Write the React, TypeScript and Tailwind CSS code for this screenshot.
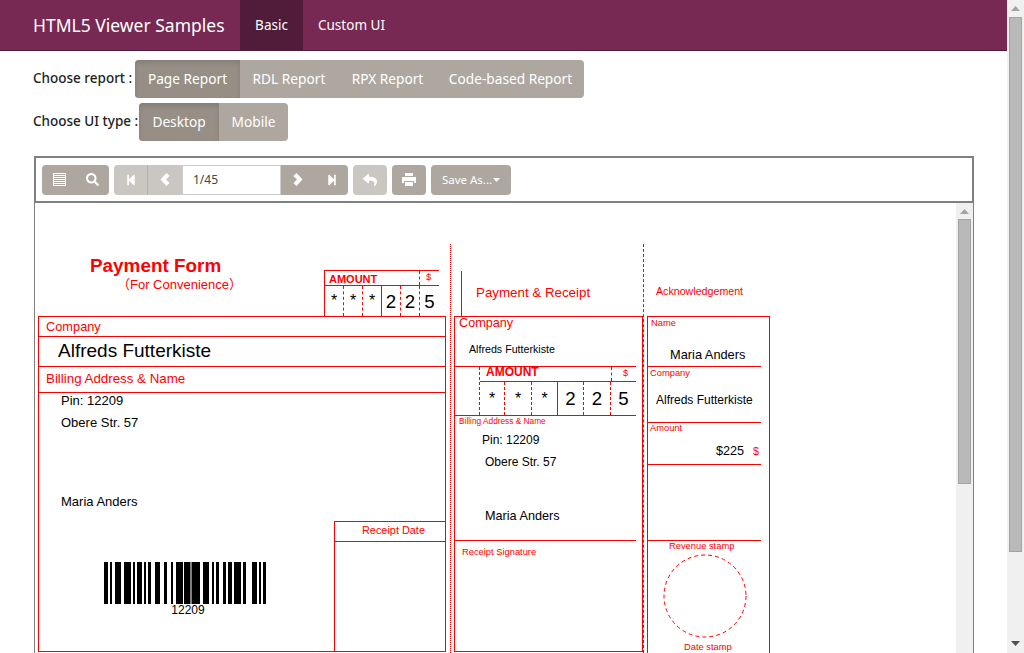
import React from "react";
import { FaReply, FaSearch, FaStepBackward, FaStepForward } from "react-icons/fa";

const bars: [number, number][] = [
  [104, 108], [110, 112], [115, 121], [124, 131], [133, 135], [137, 142], [144, 146], [148, 151], [155, 160], [164, 167],
  [171, 173], [176, 183], [184, 190.5], [191.5, 200], [203, 209], [212, 214], [216, 219], [223, 226], [228, 232],
  [234, 241], [243, 246], [252, 257], [259, 261], [263, 266],
];

function ListIcon() {
  return (
    <svg width="13" height="13" viewBox="0 0 13 13" fill="none" stroke="#fff">
      <path d="M.5 0v13M12.5 0v13M0 .5h13M0 2.5h13M0 4.5h13M0 6.5h13M0 8.5h13M0 10.5h13M0 12.5h13" />
    </svg>
  );
}

function PrintIcon() {
  return (
    <svg width="14" height="13" viewBox="0 0 14 13" fill="#fff">
      <path d="M3 0h8v3H3zM0 4h14v6h-2V8H2v2H0zM3 9h8v4H3z" />
    </svg>
  );
}

function Chevron({ right }: { right?: boolean }) {
  return (
    <svg width="10" height="13" viewBox="0 0 10 13" fill="#fff">
      <path d={right ? "M3.5 0l6 6.5-6 6.5-3-3L4 6.500.5 3z" : "M6.500 0l-6 6.500 6 6.500 3-3L6 6.500 9.500 3z"} />
    </svg>
  );
}

function Arrow({ down }: { down?: boolean }) {
  return (
    <svg width="9" height="5" viewBox="0 0 9 5">
      <path d={down ? "M0 0h9L4.5 5z" : "M4.5 0L9 5H0z"} fill={down ? "#505050" : "#a3a3a3"} />
    </svg>
  );
}

function Cell({ big, width, children }: { big?: boolean; width: string; children: React.ReactNode }) {
  return (
    <div className={`${width} flex items-center justify-center border-r border-dashed border-[#ff0000] leading-[16px] text-black ${big ? "text-[18.67px]" : "text-[16px]"}`}>
      {children}
    </div>
  );
}

function PaymentForm() {
  return (
    <section className="ml-[3px] w-[412px] shrink-0">
      <div className="flex h-[113px]">
        <div className="w-[286px] pl-[52px] pt-[52px] text-[#ff0000]">
          <div className="text-[18.9px] font-bold leading-[22px]">Payment Form</div>
          <div className="ml-[27px] whitespace-nowrap text-[13px] leading-[16px]">（For Convenience）</div>
        </div>
        <div className="w-[115px] pt-[67px]">
          <div className="border-l border-t border-[#ff0000]">
            <div className="flex h-[15px] border-b border-[#ff0000] text-[#ff0000]">
              <div className="flex-1 pl-[4px] text-[11px] font-bold leading-[16px]">AMOUNT</div>
              <div className="w-[20px] border-l border-dashed border-[#ff0000] pl-[6px] text-[9.33px] leading-[12px]">$</div>
            </div>
            <div className="flex h-[30px]">
              <Cell width="w-[19px]">*</Cell>
              <Cell width="w-[19px]">*</Cell>
              <div className="flex w-[19px] items-center justify-center border-r border-[#ff0000] text-[16px] leading-[16px] text-black">*</div>
              <Cell big width="w-[19px]"><span className="pt-[2px]">2</span></Cell>
              <Cell big width="w-[19px]"><span className="pt-[2px]">2</span></Cell>
              <div className="flex w-[19px] items-center justify-center pt-[2px] text-[18.67px] leading-[16px] text-black">5</div>
            </div>
          </div>
        </div>
      </div>
      <div className="flex h-[336px] w-[408px] flex-col border border-[#ff0000]">
        <div className="flex h-[20px] items-center border-b border-[#ff0000] pl-[7px] text-[12.8px] text-[#ff0000]">Company</div>
        <div className="flex h-[30px] items-center border-b border-[#ff0000] pb-[1px] pl-[19px] text-[19px] text-black">Alfreds Futterkiste</div>
        <div className="flex h-[26px] items-center border-b border-[#ff0000] pb-[2px] pl-[7px] text-[13.33px] text-[#ff0000]">Billing Address &amp; Name</div>
        <div className="flex flex-1">
          <div className="w-[295px] text-[13px] leading-[16px] text-black">
            <div className="pl-[22px]">Pin: 12209</div>
            <div className="mt-[6px] pl-[22px]">Obere Str. 57</div>
            <div className="mt-[63px] pl-[22px]">Maria Anders</div>
            <div className="ml-[65px] mt-[52px] w-[162px]">
              <svg className="block" width="162" height="42" viewBox="104 562 162 42">
                {bars.map(([a, b]) => (
                  <rect key={a} x={a} y={562} width={b - a} height={42} fill="#000" />
                ))}
              </svg>
              <div className="-mt-[2px] pl-[6px] text-center text-[12px] leading-[16px]">12209</div>
            </div>
          </div>
          <div className="mt-[128px] flex-1 border-l border-[#ff0000]">
            <div className="flex h-[21px] items-center border-y border-[#ff0000] pb-[2px] pl-[27px] text-[10.9px] text-[#ff0000]">Receipt Date</div>
          </div>
        </div>
      </div>
    </section>
  );
}

function PaymentReceipt() {
  const dashed = "border-r border-dashed border-[#ff0000]";
  const cell = "flex items-center justify-center leading-[16px] text-black";
  return (
    <section className="mt-[41px] h-[409px] w-[193px] shrink-0 border-l border-dotted border-[#ff0000]">
      <div className="h-[72px] pl-[10px] pt-[27px]">
        <div className="h-[45px] border-l border-[#ff0000] pl-[14px] pt-[14px] text-[13.33px] leading-[16px] text-[#ff0000]">Payment &amp; Receipt</div>
      </div>
      <div className="ml-[3px] flex h-[336px] w-[189px] flex-col border border-[#ff0000]">
        <div className="h-[50px] w-[181px] shrink-0 border-b border-[#ff0000]">
          <div className="pl-[4px] text-[12.67px] leading-[12px] text-[#ff0000]">Company</div>
          <div className="mt-[12px] pl-[14px] text-[10.67px] leading-[16px] text-black">Alfreds Futterkiste</div>
        </div>
        <div className="flex h-[49px] w-[181px] shrink-0 border-b border-[#ff0000]">
          <div className="w-[24px]" />
          <div className="flex-1 border-l border-dashed border-[#ff0000]">
            <div className="flex h-[15px] border-b border-[#ff0000] text-[#ff0000]">
              <div className="flex-1 pl-[6px] text-[12px] font-bold leading-[11px]">AMOUNT</div>
              <div className="w-[25px] border-l border-dashed border-[#ff0000] pl-[11px] text-[9.33px] leading-[12px]">$</div>
            </div>
            <div className="flex h-[33px]">
              <div className={`${cell} ${dashed} w-[25px] text-[16px]`}>*</div>
              <div className={`${cell} ${dashed} w-[27px] text-[16px]`}>*</div>
              <div className={`${cell} w-[26px] border-r border-[#ff0000] text-[16px]`}>*</div>
              <div className={`${cell} ${dashed} w-[26px] text-[18.67px]`}>2</div>
              <div className={`${cell} ${dashed} w-[27px] text-[18.67px]`}>2</div>
              <div className={`${cell} w-[25px] text-[18.67px]`}>5</div>
            </div>
          </div>
        </div>
        <div className="h-[125px] w-[181px] shrink-0 border-b border-[#ff0000]">
          <div className="pl-[4px] text-[8.3px] leading-[10px] text-[#ff0000]">Billing Address &amp; Name</div>
          <div className="mt-[6px] pl-[27px] text-[12px] leading-[16px] text-black">Pin: 12209</div>
          <div className="mt-[6px] pl-[30px] text-[12px] leading-[16px] text-black">Obere Str. 57</div>
          <div className="mt-[38px] pl-[30px] text-[12.67px] leading-[16px] text-black">Maria Anders</div>
        </div>
        <div className="mt-[3px] pl-[7px] text-[9.33px] leading-[16px] text-[#ff0000]">Receipt Signature</div>
      </div>
    </section>
  );
}

function Acknowledgement() {
  return (
    <section className="mt-[41px] h-[409px] flex-1 border-l border-dashed border-[#ff0000]">
      <div className="h-[72px] pl-[12px] pt-[39px] text-[10.67px] leading-[16px] text-[#ff0000]">Acknowledgement</div>
      <div className="ml-[3px] h-[345px] w-[123px] border border-[#ff0000] text-[#ff0000]">
        <div className="h-[50px] w-[113px] border-b border-[#ff0000]">
          <div className="pl-[3px] text-[9.33px] leading-[12px]">Name</div>
          <div className="mt-[18px] pl-[22px] text-[12.8px] leading-[16px] text-black">Maria Anders</div>
        </div>
        <div className="h-[56px] w-[113px] border-b border-[#ff0000]">
          <div className="pl-[2px] text-[9.33px] leading-[12px]">Company</div>
          <div className="mt-[13px] pl-[8px] text-[12px] leading-[16px] text-black">Alfreds Futterkiste</div>
        </div>
        <div className="h-[42px] w-[113px] border-b border-[#ff0000]">
          <div className="pl-[2px] text-[9.33px] leading-[10px]">Amount</div>
          <div className="mt-[10px] flex items-center justify-end gap-[9px] pr-[2px] leading-[16px]">
            <span className="text-[12.67px] text-black">$225</span>
            <span className="text-[10.67px]">$</span>
          </div>
        </div>
        <div className="h-[76px] w-[113px] border-b border-[#ff0000]" />
        <div className="pl-[21px] text-[9.33px] leading-[10px]">Revenue stamp</div>
        <svg className="ml-[15px] mt-[3px] block" width="84" height="84" viewBox="0 0 84 84" fill="none">
          <circle cx="42" cy="42" r="41" stroke="#ff0000" strokeDasharray="4 3" />
        </svg>
        <div className="mt-[4px] pl-[36px] text-[9.33px] leading-[10px]">Date stamp</div>
      </div>
    </section>
  );
}

const tb = "flex h-[30px] items-center justify-center text-white";
const label = "ml-[33px] pb-[2px] text-[13.5px] font-medium text-[#222]";
const seg = "flex items-center justify-center";

export default function App() {
  return (
    <div className="flex h-[653px] w-[1024px] overflow-hidden bg-white font-['Noto_Sans',sans-serif]">
      <div className="flex w-[1007px] flex-col">
        <header className="flex h-[51px] shrink-0 border-b border-[#511c39] bg-[#772953] text-white">
          <div className="ml-[33px] w-[207px] pt-[13px] text-[17.5px] leading-[24px]">HTML5 Viewer Samples</div>
          <div className="flex w-[63px] items-center justify-center bg-[#511c39] text-[13.5px]">Basic</div>
          <div className="ml-[15px] flex items-center text-[13.5px]">Custom UI</div>
        </header>

        <div className="mt-[9px] flex h-[38px] shrink-0 items-center">
          <div className={`${label} w-[102px]`}>Choose report :</div>
          <div className="flex h-full overflow-hidden rounded-[4px] bg-[#aea79f] text-[13.7px] text-white">
            <div className={`${seg} w-[105px] bg-[#978f86] shadow-[inset_0_3px_5px_rgba(0,0,0,0.125)]`}>Page Report</div>
            <div className={`${seg} w-[98px]`}>RDL Report</div>
            <div className={`${seg} w-[99px]`}>RPX Report</div>
            <div className={`${seg} w-[147px]`}>Code-based Report</div>
          </div>
        </div>
        <div className="mt-[5px] flex h-[38px] shrink-0 items-center">
          <div className={`${label} w-[106px]`}>Choose UI type :</div>
          <div className="flex h-full overflow-hidden rounded-[4px] bg-[#aea79f] text-[13.7px] text-white">
            <div className={`${seg} w-[80px] bg-[#978f86] shadow-[inset_0_3px_5px_rgba(0,0,0,0.125)]`}>Desktop</div>
            <div className={`${seg} w-[69px]`}>Mobile</div>
          </div>
        </div>

        <div className="ml-[34px] mt-[15px] flex min-h-0 w-[940px] flex-1 flex-col">
          <div className="flex h-[47px] shrink-0 items-center border-2 border-[#808080] pl-[6px]">
            <div className="flex overflow-hidden rounded-[4px] bg-[#aea79f]">
              <div className={`${tb} w-[34px]`}><ListIcon /></div>
              <div className={`${tb} w-[33px] text-[13px]`}><FaSearch /></div>
            </div>
            <div className="ml-[5px] flex overflow-hidden rounded-[4px]">
              <div className={`${tb} w-[34px] border-r border-[#b5b1ab] bg-[#cac6c1] text-[12px]`}><FaStepBackward /></div>
              <div className={`${tb} w-[34px] bg-[#cac6c1]`}><Chevron /></div>
              <div className="flex h-[30px] w-[99px] items-center border border-[#ccc] bg-white pl-[10px] text-[12px] text-[#444]">1/45</div>
              <div className={`${tb} w-[34px] bg-[#aea79f]`}><Chevron right /></div>
              <div className={`${tb} w-[33px] bg-[#aea79f] text-[12px]`}><FaStepForward /></div>
            </div>
            <div className={`${tb} ml-[5px] w-[34px] rounded-[4px] bg-[#cac6c1] text-[14px]`}><FaReply /></div>
            <div className={`${tb} ml-[5px] w-[34px] rounded-[4px] bg-[#aea79f]`}><PrintIcon /></div>
            <div className={`${tb} ml-[5px] w-[80px] gap-[1px] rounded-[4px] bg-[#aea79f] text-[11.5px]`}>
              <span>Save As...</span>
              <svg width="7" height="4" viewBox="0 0 7 4"><path d="M0 0h7L3.5 4z" fill="#fff" /></svg>
            </div>
          </div>
          <div className="flex min-h-0 flex-1 border-x border-[#808080]">
            <div className="flex h-[450px] flex-1 overflow-hidden bg-white font-['Liberation_Sans','Noto_Sans_CJK_SC',sans-serif]">
              <PaymentForm />
              <PaymentReceipt />
              <Acknowledgement />
            </div>
            <div className="flex w-[17px] shrink-0 flex-col items-center bg-[#f0f0f0]">
              <div className="flex h-[16px] items-center justify-center"><Arrow /></div>
              <div className="h-[265px] w-[13px] border border-[#a3a3a3] bg-[#b9b9b9]" />
            </div>
          </div>
        </div>
      </div>
      <div className="flex w-[17px] shrink-0 flex-col items-center bg-[#f0f0f0]">
        <div className="flex h-[17px] items-center justify-center"><Arrow /></div>
        <div className="h-[535px] w-[13px] border border-[#a3a3a3] bg-[#b9b9b9]" />
        <div className="flex flex-1 items-end justify-center pb-[7px]"><Arrow down /></div>
      </div>
    </div>
  );
}
